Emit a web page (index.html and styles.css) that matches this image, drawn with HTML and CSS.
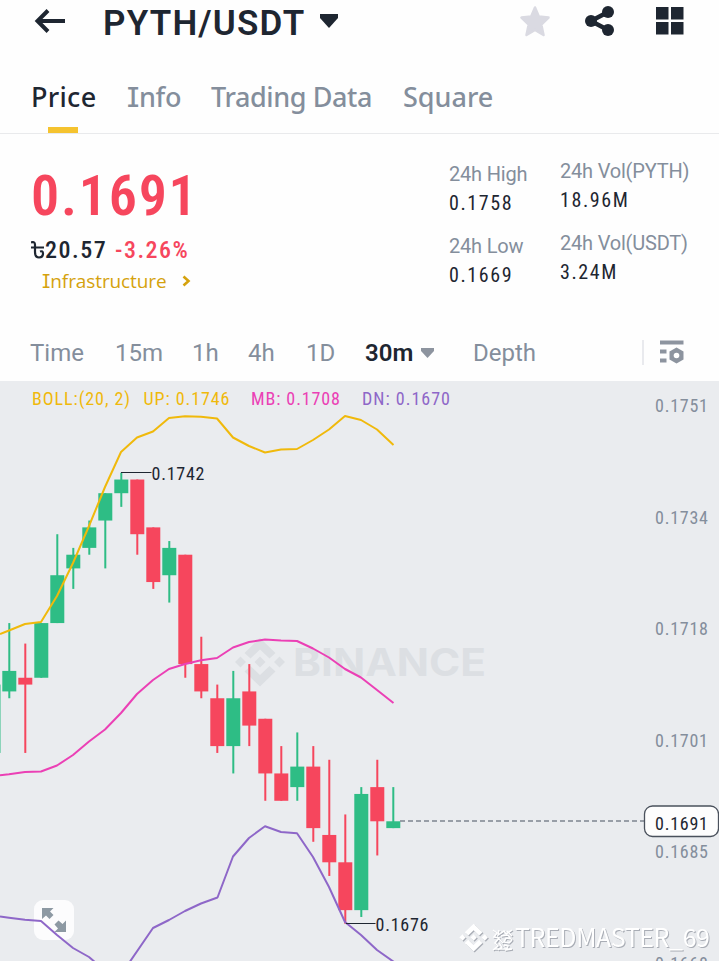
FILE: index.html
```html
<!DOCTYPE html>
<html lang="en">
<head>
    <meta charset="UTF-8">
    <title>PYTH/USDT</title>
    <link rel="stylesheet" href="styles.css">
</head>
<body>
    <div class="topbar">
        <svg class="back" width="32" height="26" viewBox="0 0 32 26">
            <path d="M31 13H4M14 2.500L3.500 13L14 23.500" fill="none" stroke="#1e2631" stroke-width="4"/>
        </svg>
        <h1>PYTH/USDT</h1>
        <svg class="caret" width="18" height="14" viewBox="0 0 18 14">
            <path d="M0 0H18V4L9 14L0 4Z" fill="#1e2631"/>
        </svg>
        <svg class="star" width="30" height="31" viewBox="0 0 30 31">
            <path d="M15 1.500L18.800 10.500L28.500 11.500L21.300 18.500L23.500 29L15 24L6.500 29L8.700 18.500L1.500 11.500L11.200 10.500Z" fill="#dadae2" stroke="#dadae2" stroke-width="2.500" stroke-linejoin="round"/>
        </svg>
        <svg class="share" width="30" height="32" viewBox="0 0 30 32">
            <path d="M23 7L6 16L23 25" fill="none" stroke="#1e2631" stroke-width="4.500"/>
            <circle cx="6" cy="16" r="6" fill="#1e2631"/>
            <circle cx="23" cy="7" r="6" fill="#1e2631"/>
            <circle cx="23" cy="25" r="6" fill="#1e2631"/>
        </svg>
        <svg class="grid" width="28" height="28" viewBox="0 0 28 28">
            <path d="M0 0h12.500v12.500h-12.500zM15 0h12.500v12.500h-12.500zM0 15h12.500v12.500h-12.500zM15 15h12.500v12.500h-12.500z" fill="#1e2631"/>
        </svg>
    </div>

    <div class="tabs">
        <div class="tab active">Price</div>
        <div class="tab tab-info"><span class="slab">I</span>nfo</div>
        <div class="tab tab-data">Trading Data</div>
        <div class="tab tab-square">Square</div>
    </div>

    <div class="summary">
        <div class="price-box">
            <div class="price">0.1691</div>
            <div class="change">
                <svg width="14" height="18" viewBox="0 0 14 18">
                    <path d="M0 1.500Q4 0 4 4V11Q4 16.500 8 16.500Q12 16.500 12 12.500Q12 9.500 9 10.500M0 6.500H13" fill="none" stroke="#1e2631" stroke-width="2.200"/>
                </svg>
                <span class="fiat">20.57</span>
                <span class="percent">-3.26%</span>
            </div>
            <div class="sector">
                <span class="sector-name"><span class="slab">I</span>nfrastructure</span>
                <svg width="9" height="12" viewBox="0 0 9 12">
                    <path d="M1.500 1.500L6.500 6L1.500 10.500" fill="none" stroke="#d5a20d" stroke-width="2.600"/>
                </svg>
            </div>
        </div>
        <div class="stats stats-range">
            <div class="label">24h High</div>
            <div class="value">0.1758</div>
            <div class="label">24h Low</div>
            <div class="value">0.1669</div>
        </div>
        <div class="stats stats-volume">
            <div class="label">24h Vol(PYTH)</div>
            <div class="value">18.96M</div>
            <div class="label">24h Vol(USDT)</div>
            <div class="value">3.24M</div>
        </div>
    </div>

    <div class="intervals">
        <div class="interval w-time">Time</div>
        <div class="interval w-15m">15m</div>
        <div class="interval w-1h">1h</div>
        <div class="interval w-4h">4h</div>
        <div class="interval w-1d">1D</div>
        <div class="interval w-30m selected">30m
            <svg width="13" height="10" viewBox="0 0 13 10">
                <path d="M0 0H13V3L6.500 10L0 3Z" fill="#8d949f"/>
            </svg>
        </div>
        <div class="interval w-depth">Depth</div>
        <svg class="settings" width="25" height="25" viewBox="0 0 25 25">
            <path d="M0 2.500H23.500M0 11.500H6.500M0 20.500H6.500" stroke="#8d949f" stroke-width="4"/>
            <path d="M16.500 7.500L23.500 11.500V19.500L16.500 23.500L9.500 19.500V11.500Z" fill="#8d949f"/>
            <circle cx="16.500" cy="15.500" r="2.800" fill="#fff"/>
        </svg>
    </div>

    <svg class="chart" viewBox="0 381 719 580" width="719" height="580">
        <!-- indicator values -->
        <g class="legend">
            <text x="32" y="405" textLength="98" class="up">BOLL:(20, 2)</text>
            <text x="143.500" y="405" textLength="86" class="up">UP: 0.1746</text>
            <text x="251" y="405" textLength="89" class="mb">MB: 0.1708</text>
            <text x="362" y="405" textLength="88" class="dn">DN: 0.1670</text>
        </g>

        <!-- watermark -->
        <g class="watermark">
            <g id="mark">
                <path d="M260 638L275.500 653L269.500 658.500L260 649.500L250.500 658.500L244.500 653Z"/>
                <path d="M260 686.500L275.500 671.500L269.500 666L260 675L250.500 666L244.500 671.500Z"/>
                <path d="M260 656.500L265.500 662L260 667.500L254.500 662Z"/>
                <path d="M240.500 656.500L246 662L240.500 667.500L235 662Z"/>
                <path d="M279.500 656.500L285 662L279.500 667.500L274 662Z"/>
            </g>
            <text x="293" y="676" textLength="193" lengthAdjust="spacingAndGlyphs">BINANCE</text>
        </g>

        <g class="axis">
            <text x="655" y="412" textLength="53">0.1751</text>
            <text x="655" y="524" textLength="53">0.1734</text>
            <text x="655" y="635" textLength="53">0.1718</text>
            <text x="655" y="747" textLength="53">0.1701</text>
            <text x="655" y="858" textLength="53">0.1685</text>
            <text x="655" y="970" textLength="53">0.1668</text>
        </g>

        <!-- full screen button -->
        <rect x="34" y="900" width="40" height="40" rx="9" fill="#fcfcfd"/>
        <path d="M42 908H53.500L50 911.500L53.500 915L49.500 919L46 915.500L42 919ZM66 932V920.500L62.500 924L58.500 920.500L54.500 924.500L58 928.500L54.500 932Z" fill="#8d99a3"/>

        <g id="candles"></g>

        <polyline class="line up-line" points="0,634 9,630.500 25,624 41,622 57,596 73,563 89,526 105,487 121,452 137,437.500 153,431.500 169,418 185,416.300 201,416.700 217,418.500 233,437.500 249,446 265,452.500 281,449.500 297,449 313,440 329,429.500 345,416 361,420 377,429.500 393.500,445"/>
        <polyline class="line mb-line" points="0,775.200 9,774.300 25,772 41,771.500 57,765.500 73,755 89,741.500 105,729.500 121,713 137,694 153,680 169,669 185,664 201,660.300 217,658 233,647.500 249,642 265,639.500 281,640.500 297,641 313,648.500 329,657.500 345,669 361,677.500 377,690 393.500,703"/>
        <polyline class="line dn-line" points="0,916.500 9,917.800 25,919.800 41,921 57,935 73,948 89,957 96,963"/>
        <polyline class="line dn-line" points="129,963 153,928 169,920 185,911 201,903.500 217.500,897.500 233,856.500 249,838 265,826.300 281,832 297,833.300 313,857 329,887 345,922 361,935 377,950 394,962"/>

        <!-- high and low markers -->
        <path d="M121 472.500H151.500M346 923.500H375.500" stroke="#1e2631" stroke-width="1.200"/>
        <text class="marker" x="151.500" y="480" textLength="53">0.1742</text>
        <text class="marker" x="375.500" y="931" textLength="53">0.1676</text>

        <!-- last price -->
        <path d="M400 821H644" stroke="#7d8490" stroke-width="1.500" stroke-dasharray="5 3"/>
        <rect x="644.500" y="806" width="74" height="30.500" rx="8" fill="#fdfdfd" stroke="#4a515c" stroke-width="1.300"/>
        <text class="marker" x="655" y="830" textLength="53">0.1691</text>

        <!-- author -->
        <g class="author">
            <use href="#mark" class="author-mark" transform="translate(325.200 559.500) scale(.571)"/>
            <path class="ornament" d="M493 930l4 3l-3 4l5 1l-4 5l3 3l-5 4M499 930l-1 5l6-4l2 3l6-4M501 936l7-1l3 4l-5-1l-2 4l5 1l3-3M499 943l3 4l-4 3M504 945l4 1l-2 4l6-1M494 949h18M498 938l5 5M507 931l5 5"/>
            <text x="515" y="946.500" textLength="195">TREDMASTER_69</text>
        </g>
    </svg>

    <script>
        // open, close, high, low (in 0.0001 USDT)
        const candles = [
            [1710, 1713, 1720, 1709], [1712, 1711, 1717, 1701], [1712, 1720, 1720, 1712],
            [1720, 1727, 1733, 1720], [1728, 1730, 1731, 1725], [1731, 1734, 1735, 1730],
            [1735, 1739, 1739, 1728], [1739, 1741, 1742, 1737], [1741, 1733, 1741, 1730],
            [1734, 1726, 1734, 1725], [1727, 1731, 1732, 1723], [1730, 1714, 1730, 1712],
            [1714, 1710, 1718, 1709], [1709, 1702, 1711, 1701], [1702, 1709, 1713, 1698],
            [1710, 1705, 1714, 1702], [1706, 1698, 1706, 1694], [1698, 1694, 1702, 1694],
            [1696, 1699, 1704, 1694], [1699, 1690, 1702, 1688], [1689, 1685, 1700, 1683],
            [1685, 1678, 1692, 1676], [1678, 1695, 1696, 1677], [1696, 1691, 1700, 1686],
            [1690, 1691, 1696, 1690]
        ];

        function priceToY(price) {
            return 472.7 + (1742 - price) * 6.835;
        }

        function addRect(x, top, bottom, width, color) {
            const rect = document.createElementNS('http://www.w3.org/2000/svg', 'rect');
            rect.setAttribute('x', x - width / 2);
            rect.setAttribute('y', top);
            rect.setAttribute('width', width);
            rect.setAttribute('height', bottom - top);
            rect.setAttribute('fill', color);
            document.getElementById('candles').appendChild(rect);
        }

        addRect(0, priceToY(1711), priceToY(1701), 1, '#2ebd85');
        candles.forEach(([open, close, high, low], i) => {
            const x = 9.3 + i * 16;
            const color = close > open ? '#2ebd85' : '#f6465d';
            addRect(x, priceToY(high), priceToY(low), 2, color);
            addRect(x, priceToY(Math.max(open, close)), priceToY(Math.min(open, close)), 14, color);
        });
    </script>
</body>
</html>
```
FILE: styles.css
```css
body {
    margin: 0;
    width: 719px;
    height: 961px;
    overflow: hidden;
    background-color: #fefefe;
    font-family: Roboto, "Liberation Sans", sans-serif;
    color: #1e2631;
}

svg {
    display: block;
    flex-shrink: 0;
}

.topbar {
    display: flex;
    align-items: center;
    height: 42px;
    padding-left: 34px;
}

h1 {
    width: 202px;
    margin: 5px 0 0 37px;
    font-size: 35px;
    line-height: 42px;
    font-weight: 600;
    letter-spacing: 1.2px;
    white-space: nowrap;
}

.caret {
    margin-left: 15px;
}

.star {
    margin-left: 182px;
}

.share {
    margin-left: 35px;
}

.grid {
    margin-left: 41px;
}

.tabs {
    display: flex;
    height: 91px;
    padding-left: 31px;
    border-bottom: 1px solid #e9eaec;
    font-family: "Noto Sans", sans-serif;
    font-size: 27px;
    font-weight: 500;
    line-height: 38px;
    color: #848e9c;
    white-space: nowrap;
}

.tab {
    box-sizing: border-box;
    padding-top: 36px;
}

.active {
    width: 96px;
    color: #1e2631;
    letter-spacing: .3px;
}

.active::after {
    content: "";
    display: block;
    width: 30px;
    height: 6px;
    margin: 11px 0 0 17px;
    background-color: #f5c32f;
}

.tab-info {
    width: 84px;
    letter-spacing: -.3px;
}

.tab-data {
    width: 192px;
    letter-spacing: -.4px;
}

.slab {
    font-family: Inter, sans-serif;
    font-feature-settings: "cv08";
}

.summary {
    display: flex;
    height: 195px;
}

.price-box {
    width: 418px;
    padding-left: 31px;
}

.price {
    margin-top: 32px;
    font-size: 56px;
    line-height: 60px;
    font-weight: 600;
    font-stretch: 75%;
    letter-spacing: 1.8px;
    color: #f6465d;
}

.change {
    display: flex;
    align-items: center;
    margin-top: 10px;
    height: 28px;
    font-size: 24px;
    font-weight: 500;
    font-stretch: 75%;
    letter-spacing: 1.5px;
}

.fiat {
    width: 70px;
}

.percent {
    color: #f6465d;
}

.sector {
    display: flex;
    align-items: center;
    height: 34px;
    padding-left: 11px;
    font-family: "Open Sans", sans-serif;
    font-size: 19px;
    color: #d5a20d;
}

.sector-name {
    width: 140px;
    letter-spacing: -.1px;
}

.stats-range {
    width: 111px;
    padding-top: 27px;
}

.stats-volume {
    padding-top: 24px;
}

.label {
    height: 27px;
    font-size: 20px;
    line-height: 26px;
    letter-spacing: -.2px;
    color: #848e9c;
    white-space: nowrap;
}

.value {
    height: 45px;
    font-size: 20px;
    line-height: 30px;
    font-stretch: 75%;
    letter-spacing: 1.6px;
}

.intervals {
    display: flex;
    align-items: center;
    height: 48px;
    padding: 0 0 4px 30px;
    font-size: 24px;
    color: #848e9c;
    white-space: nowrap;
}

.w-time {
    width: 85px;
}

.w-15m {
    width: 77px;
}

.w-1h {
    width: 56px;
}

.w-4h {
    width: 58px;
}

.w-1d {
    width: 59px;
}

.w-30m {
    display: flex;
    align-items: center;
    justify-content: space-between;
    width: 69px;
    margin-right: 39px;
}

.w-depth {
    width: 169px;
}

.selected {
    font-weight: 600;
    color: #1e2631;
}

.settings {
    margin-bottom: 2px;
    padding-left: 16px;
    border-left: 2px solid #e9eaee;
}

.chart {
    background-color: #eaecef;
}

.legend {
    font-size: 18px;
    font-stretch: 75%;
}

.up {
    fill: #f0b90b;
}

.mb {
    fill: #eb40b5;
}

.dn {
    fill: #8e67c8;
}

.watermark {
    fill: #dcdfe3;
    font-family: Inter, sans-serif;
    font-size: 38px;
    font-weight: 700;
}

.axis {
    font-size: 18px;
    font-stretch: 75%;
    fill: #848e9c;
}

.marker {
    font-size: 18px;
    font-stretch: 75%;
    fill: #1e2631;
}

.line {
    fill: none;
    stroke-width: 2;
    stroke-linejoin: round;
}

.up-line {
    stroke: #f0b90b;
}

.mb-line {
    stroke: #eb40b5;
}

.dn-line {
    stroke: #8e67c8;
}

.author {
    fill: #fff;
    font-family: "Noto Sans CJK SC", sans-serif;
    font-size: 25px;
    filter: drop-shadow(1px 1px 0 #a9adb5);
}

.ornament {
    fill: none;
    stroke: #fff;
    stroke-width: 1.5;
}
```
